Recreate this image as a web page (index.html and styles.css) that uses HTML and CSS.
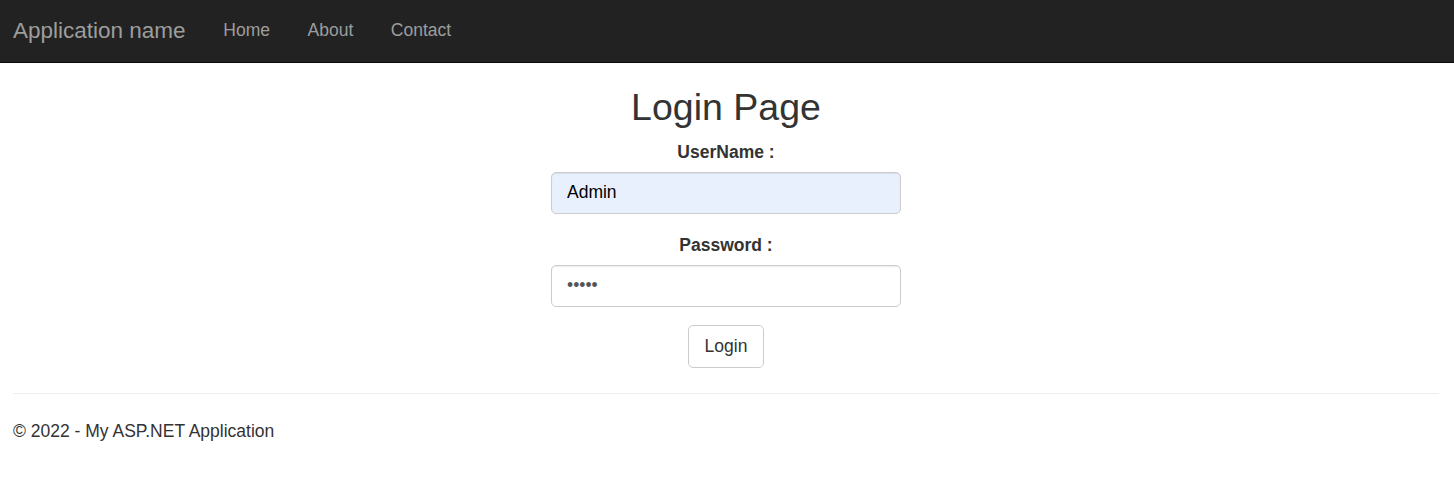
FILE: index.html
```html
<!DOCTYPE html>
<html lang="en">
<head>
<meta charset="UTF-8" />
<title>Login Page - My ASP.NET Application</title>
<link rel="stylesheet" href="styles.css">
</head>
<body>
  <div class="navbar">
    <a class="navbar-brand" href="#">Application name</a>
    <ul class="nav">
      <li><a href="#">Home</a></li>
      <li><a href="#">About</a></li>
      <li><a href="#">Contact</a></li>
    </ul>
  </div>

  <div class="body-content">
    <form class="login-form" onsubmit="return false;">
      <h2>Login Page</h2>
      <label for="username">UserName :</label>
      <input id="username" class="form-control filled" type="text" value="Admin" />
      <label for="password">Password :</label>
      <input id="password" class="form-control" type="password" value="admin" />
      <button type="submit" class="btn">Login</button>
    </form>

    <hr />
    <footer>
      <p>&copy; 2022 - My ASP.NET Application</p>
    </footer>
  </div>
</body>
</html>
```

FILE: styles.css
```css
/* Base */
body {
  margin: 0;
  font-family: "Liberation Sans", Arial, Helvetica, sans-serif;
  font-size: 17.5px;
  line-height: 25px;
  color: #333;
  background: #fff;
}

/* Dark top bar */
.navbar {
  box-sizing: border-box;
  display: flex;
  align-items: center;
  height: 63px;
  padding: 0 0 2px 13px;
  background: #222;
  border-bottom: 1px solid #080808;
}
.navbar-brand {
  font-size: 22.5px;
  color: #9d9d9d;
  text-decoration: none;
  padding-right: 19px;
}
.nav {
  display: flex;
  margin: 0;
  padding: 0;
  list-style: none;
}
.nav a {
  display: block;
  padding: 0 18.75px;
  color: #9d9d9d;
  text-decoration: none;
}
.nav a:hover {
  color: #fff;
}

/* Page content */
.body-content {
  margin: 0 15px 0 13px;
}
.login-form {
  display: flex;
  flex-direction: column;
  align-items: center;
}
h2 {
  margin: 24px 0 11px;
  font-size: 37.5px;
  line-height: 41px;
  font-weight: 500;
}
label {
  font-weight: 700;
  margin: 1px 0 6.5px;
}
.form-control {
  box-sizing: border-box;
  width: 350px;
  height: 42px;
  padding: 7px 15px;
  font-family: inherit;
  font-size: 17.5px;
  color: #555;
  background: #fff;
  border: 1px solid #ccc;
  border-radius: 5px;
  box-shadow: inset 0 1px 1px rgba(0,0,0,0.075);
  margin-bottom: 18.5px;
}
.form-control.filled {
  background: #e8f0fe;
  color: #000;
}
.btn {
  box-sizing: border-box;
  height: 43px;
  padding: 7px 16px;
  font-family: inherit;
  font-size: 17.5px;
  color: #333;
  background: #fff;
  border: 1px solid #ccc;
  border-radius: 5px;
  cursor: pointer;
}
.btn:hover {
  background: #e6e6e6;
}

hr {
  margin: 25px 0;
  border: 0;
  border-top: 1px solid #eee;
}
footer p {
  margin: 0 0 12px;
}
```
